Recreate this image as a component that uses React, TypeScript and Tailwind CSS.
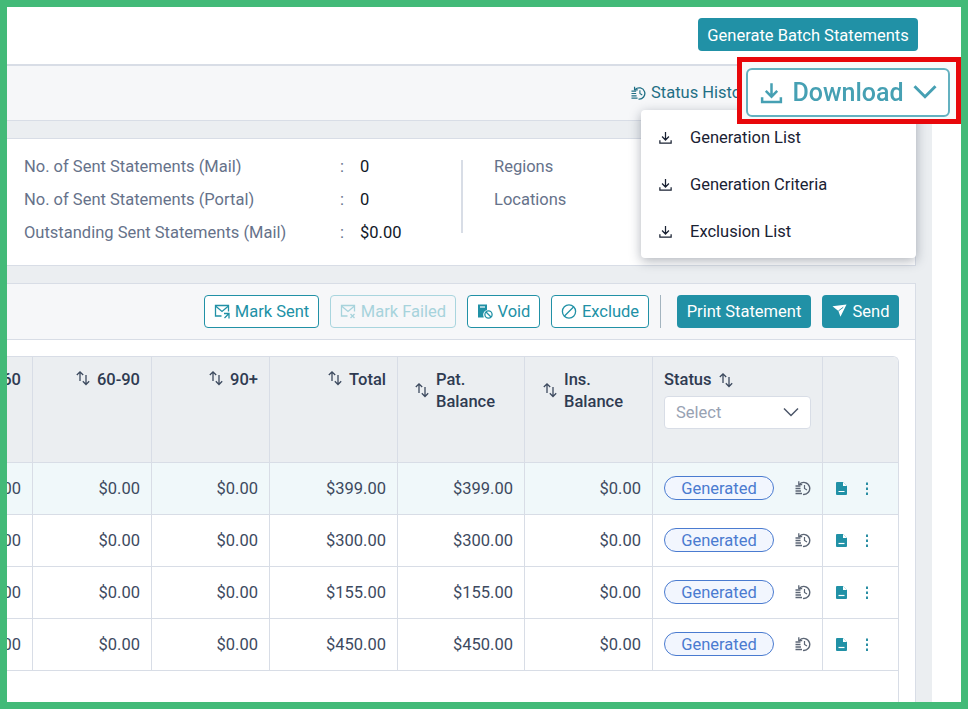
import React from "react";

const FONT = "font-['Roboto','Liberation_Sans',sans-serif]";

function DownloadIcon({ className, width = 2 }: { className?: string; width?: number }) {
  return (
    <svg viewBox="0 0 24 24" fill="none" stroke="currentColor" strokeWidth={width} className={className} aria-hidden>
      <path d="M12 3v13M6.500 10.500 12 16l5.500-5.500M3 16.500V21h18v-4.500" strokeLinejoin="miter" />
    </svg>
  );
}

function SortIcon({ className = "" }: { className?: string }) {
  return (
    <svg viewBox="0 0 16 16" fill="none" stroke="#3d4a5f" strokeWidth="1.300" className={`h-[16px] w-[16px] shrink-0 ${className}`} aria-hidden>
      <path d="M5 11V2M1.800 5 5 1.800 8.200 5" />
      <path d="M11 5v9.500M7.800 11.300l3.200 3.200 3.200-3.200" />
    </svg>
  );
}

function HistoryIcon({ className, color }: { className?: string; color: string }) {
  return (
    <svg viewBox="0 0 16 15" fill="none" stroke={color} className={className} aria-hidden>
      <path d="M4.500 3.200A6 6 0 1 1 8 13.400" strokeWidth="1.400" />
      <path d="M3.800 0.300v3.400h3.400" strokeWidth="1.300" />
      <path d="M9.500 4v3.500l2.500 1.500" strokeWidth="1.200" />
      <path d="M0.500 5h5M0.500 7.500h5M0.500 10h5.500M0.500 12.500h6.500" strokeWidth="1.300" />
    </svg>
  );
}

function DocIcon() {
  return (
    <svg viewBox="0 0 11 13" className="h-[13px] w-[11px]" aria-hidden>
      <path d="M1 0h6l4 4v8a1 1 0 0 1-1 1H1a1 1 0 0 1-1-1V1a1 1 0 0 1 1-1Z" fill="#2191a6" />
      <path d="M7 0v4h4Z" fill="#ffffff" />
      <path d="M2.500 9.500h6" stroke="#ffffff" strokeWidth="1.200" />
    </svg>
  );
}

function DotsIcon() {
  return (
    <svg viewBox="0 0 4 14" className="h-[14px] w-[4px]" fill="#2a8ea3" aria-hidden>
      <rect x="1" y="0.500" width="2" height="2.500" />
      <rect x="1" y="5.500" width="2" height="2.500" />
      <rect x="1" y="10.500" width="2" height="2.500" />
    </svg>
  );
}

function MailArrowIcon() {
  return (
    <svg viewBox="0 0 16 16" fill="none" stroke="currentColor" strokeWidth="1.300" className="h-[16px] w-[16px]" aria-hidden>
      <path d="M7.500 12H1.500V1.500h13v6" />
      <path d="m1.500 2 6.500 5.500L14.500 2" />
      <path d="M10 9.500h5v5M15 9.500 10.500 14" />
    </svg>
  );
}

function MailFailIcon() {
  return (
    <svg viewBox="0 0 16 16" fill="none" stroke="currentColor" strokeWidth="1.300" className="h-[16px] w-[16px]" aria-hidden>
      <path d="M7.500 12H1.500V1.500h13v6" />
      <path d="m1.500 2 6.500 5.500L14.500 2" />
      <path d="m10.500 10 4 4M14.500 10l-4 4" />
    </svg>
  );
}

function VoidIcon() {
  return (
    <svg viewBox="0 0 16 16" className="h-[16px] w-[16px]" aria-hidden>
      <path d="M1 0.500h9v5.500A5 5 0 0 0 6.800 13.500H1Z" fill="currentColor" />
      <path d="M3 3h5" stroke="#ffffff" strokeWidth="1.200" />
      <circle cx="11.500" cy="10.500" r="3.600" fill="none" stroke="currentColor" strokeWidth="1.300" />
      <path d="m9 8 5 5" stroke="currentColor" strokeWidth="1.300" />
    </svg>
  );
}

function BanIcon() {
  return (
    <svg viewBox="0 0 16 16" fill="none" stroke="currentColor" strokeWidth="1.300" className="h-[16px] w-[16px]" aria-hidden>
      <circle cx="8" cy="7.500" r="6.600" />
      <path d="M3.500 12 12.500 3" />
    </svg>
  );
}

function SendIcon() {
  return (
    <svg viewBox="0 0 16 16" className="h-[15px] w-[15px]" aria-hidden>
      <path d="M0.500 2.500 15.500 0.500 9 13.500 6.800 7.400Z" fill="#ffffff" />
      <path d="M6.800 7.400 12 3.500" stroke="#2191a6" strokeWidth="1" />
    </svg>
  );
}

function Chevron({ className, width = 1.500 }: { className?: string; width?: number }) {
  return (
    <svg viewBox="0 0 16 10" fill="none" stroke="currentColor" strokeWidth={width} className={className} aria-hidden>
      <path d="m1 1.500 7 7 7-7" />
    </svg>
  );
}

function OutlineButton({
  icon,
  label,
  disabled,
  className = "",
}: {
  icon: React.ReactNode;
  label: string;
  disabled?: boolean;
  className?: string;
}) {
  return (
    <button
      type="button"
      className={`flex h-[33px] items-center justify-center gap-[5px] rounded-[4px] border ${
        disabled
          ? "border-[#a9d5de] bg-[#f6f7f9] text-[#a7d3dc]"
          : "border-[#2191a6] bg-white text-[#2191a6]"
      } ${className}`}
    >
      {icon}
      <span className="pt-[2px]">{label}</span>
    </button>
  );
}

const COLS = "grid grid-cols-[26px_119px_118px_128px_127px_128px_170px_76px]";
const CELL = "border-r border-b border-[#d8dde6]";

const rows = [
  { total: "$399.00", bg: "bg-[#f0f8fa]" },
  { total: "$300.00", bg: "bg-white" },
  { total: "$155.00", bg: "bg-white" },
  { total: "$450.00", bg: "bg-white" },
];

function HeadCell({ label }: { label: string }) {
  return (
    <div className={`${CELL} flex items-start justify-end gap-[6px] pr-[11px] pt-[13px] leading-[20px] font-medium text-[#2f3b52]`}>
      <SortIcon />
      {label}
    </div>
  );
}

function TwoLineHead({ label }: { label: string }) {
  return (
    <div className={`${CELL} flex items-start justify-end gap-[6px] pr-[11px] pt-[12px] leading-[22px] font-medium text-[#2f3b52]`}>
      <SortIcon className="mt-[13px]" />
      <span className="w-[77px]">{label}</span>
    </div>
  );
}

function Money({ value }: { value: string }) {
  return <div className={`${CELL} flex items-center justify-end pr-[11px] pt-[2px] text-[#3d4a5f]`}>{value}</div>;
}

function InfoRow({ label, value }: { label: string; value: string }) {
  return (
    <div className="flex h-[33px] items-center">
      <span className="w-[316px] text-[#66728a]">{label}</span>
      <span className="w-[20px] text-[#66728a]">:</span>
      <span className="text-[#111827]">{value}</span>
    </div>
  );
}

function MenuItem({ label }: { label: string }) {
  return (
    <div className="flex h-[47px] items-center pl-[17px] text-[#1a2233]">
      <DownloadIcon className="mr-[17px] -mt-px h-[15px] w-[15px] text-[#1a2233]" />
      <span className="pt-[2px]">{label}</span>
    </div>
  );
}

export default function App() {
  return (
    <div className={`${FONT} relative h-[709px] w-[968px] overflow-hidden border-[7px] border-[#43ba78] bg-white text-[16.5px]`}>
      {/* top bar */}
      <div className="flex h-[57px] justify-end pt-[11px] pr-[43px]">
        <button type="button" className="flex h-[33px] w-[220px] items-center justify-center rounded-[4px] bg-[#2191a6] text-white">
          <span className="pt-[4px]">Generate Batch Statements</span>
        </button>
      </div>

      <div className="w-[925px] bg-[#ebeef1] pb-[40px]">
        {/* status band */}
        <div className="flex h-[57px] items-center border-t-2 border-b border-[#d8dde6] bg-[#f6f7f9] pl-[624px]">
          <HistoryIcon className="mr-[5px] h-[15px] w-[15px]" color="#1f6f85" />
          <span className="text-[#1f6f85]">Status History</span>
        </div>

        {/* summary */}
        <div className="mt-[17px] flex h-[128px] w-[909px] border-y border-r border-[#d8dde6] bg-white pl-[17px] pt-[12px]">
          <div className="w-[437px]">
            <InfoRow label="No. of Sent Statements (Mail)" value="0" />
            <InfoRow label="No. of Sent Statements (Portal)" value="0" />
            <InfoRow label="Outstanding Sent Statements (Mail)" value="$0.00" />
          </div>
          <div className="mt-[9px] h-[73px] w-[2px] bg-[#d8dde6]" />
          <div className="pl-[31px] text-[#66728a]">
            <div className="flex h-[33px] items-center">Regions</div>
            <div className="flex h-[33px] items-center">Locations</div>
          </div>
        </div>

        {/* statements card */}
        <div className="mt-[17px] w-[909px] border-t border-r border-[#d8dde6] bg-white">
          <div className="flex h-[56px] items-center justify-end gap-[11px] border-b border-[#d8dde6] bg-[#f6f7f9] pr-[16px]">
            <OutlineButton icon={<MailArrowIcon />} label="Mark Sent" className="w-[115px]" />
            <OutlineButton icon={<MailFailIcon />} label="Mark Failed" disabled className="w-[126px]" />
            <OutlineButton icon={<VoidIcon />} label="Void" className="w-[73px]" />
            <OutlineButton icon={<BanIcon />} label="Exclude" className="w-[98px]" />
            <div className="mr-[5px] h-[33px] w-px bg-[#a3b4bf]" />
            <button type="button" className="h-[33px] w-[134px] rounded-[4px] bg-[#2191a6] pt-[2px] text-white">
              Print Statement
            </button>
            <button type="button" className="flex h-[33px] w-[77px] items-center justify-center gap-[6px] rounded-[4px] bg-[#2191a6] text-white">
              <SendIcon />
              <span className="pt-[2px]">Send</span>
            </button>
          </div>

          <div className="h-[363px] pt-[16px]">
            <div className="h-full w-[892px] overflow-hidden rounded-tr-[6px] border-t border-r border-[#d8dde6]">
              <div className={`${COLS} h-[106px] bg-[#ebeef1]`}>
                <div className={`${CELL} flex justify-end overflow-hidden whitespace-nowrap pr-[11px] pt-[13px] leading-[20px] font-medium text-[#2f3b52]`}>
                  30-60
                </div>
                <HeadCell label="60-90" />
                <HeadCell label="90+" />
                <HeadCell label="Total" />
                <TwoLineHead label="Pat. Balance" />
                <TwoLineHead label="Ins. Balance" />
                <div className={`${CELL} pl-[11px] pt-[13px]`}>
                  <div className="flex items-center gap-[6px] leading-[20px] font-medium text-[#2f3b52]">
                    Status
                    <SortIcon />
                  </div>
                  <div className="mt-[6px] flex h-[33px] w-[147px] items-center justify-between rounded-[4px] border border-[#d8dde6] bg-white px-[11px] text-[#98a2b3]">
                    <span className="pt-[2px]">Select</span>
                    <Chevron className="-mt-px h-[10px] w-[16px] text-[#4b5668]" />
                  </div>
                </div>
                <div className={CELL} />
              </div>
              {rows.map((row) => (
                <div key={row.total} className={`${COLS} h-[52px] ${row.bg}`}>
                  <div className={`${CELL} flex items-center justify-end overflow-hidden whitespace-nowrap pr-[11px] pt-[2px] text-[#3d4a5f]`}>
                    $0.00
                  </div>
                  <Money value="$0.00" />
                  <Money value="$0.00" />
                  <Money value={row.total} />
                  <Money value={row.total} />
                  <Money value="$0.00" />
                  <div className={`${CELL} flex items-center pl-[11px]`}>
                    <span className="-mt-[2px] flex h-[24px] w-[110px] items-center justify-center rounded-full border border-[#4a7bd0] bg-[#f2f6fe] pt-[2px] leading-[18px] text-[#4a7bd0]">
                      Generated
                    </span>
                    <HistoryIcon className="-mt-px ml-[21px] h-[15px] w-[16px]" color="#5c6675" />
                  </div>
                  <div className={`${CELL} flex items-center pl-[13px]`}>
                    <DocIcon />
                    <span className="ml-[18px] flex">
                      <DotsIcon />
                    </span>
                  </div>
                </div>
              ))}
            </div>
          </div>
        </div>
      </div>

      {/* dropdown menu */}
      <div className="absolute top-[103px] left-[634px] w-[275px] rounded-[4px] bg-white pt-[4px] pb-[3px] shadow-[0_3px_12px_rgba(30,40,60,0.35)]">
        <MenuItem label="Generation List" />
        <MenuItem label="Generation Criteria" />
        <MenuItem label="Exclusion List" />
      </div>

      {/* red callout around the download button */}
      <div className="absolute top-[50px] right-0 flex h-[67px] w-[224px] items-start border-[5px] border-[#e8070b] bg-[#f8f9fa] pt-[6px] pl-[4px]">
        <div className="flex h-[49px] w-[204px] items-center justify-center rounded-[6px] border-2 border-[#64b1c0] bg-white text-[25px] font-medium text-[#46a0b3] blur-[0.4px]">
          <DownloadIcon className="mr-[8px] h-[25px] w-[25px]" width={2.4} />
          Download
          <Chevron className="ml-[9px] -mt-[2px] h-[15px] w-[24px]" width={2} />
        </div>
      </div>
    </div>
  );
}
